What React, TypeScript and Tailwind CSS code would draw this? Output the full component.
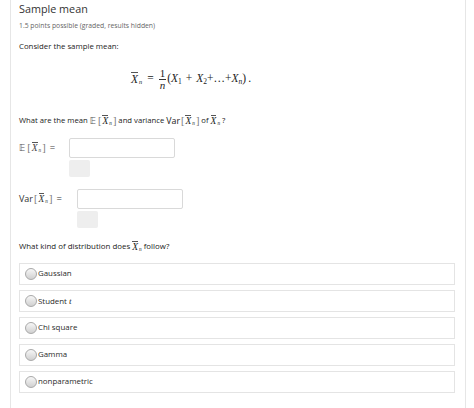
import React from "react";

const serif = "font-['Liberation_Serif','DejaVu_Serif',serif]";

function Xbar({ sub = "n" }: { sub?: string }) {
  return (
    <span className="inline-flex items-baseline">
      <span className={`${serif} italic border-t border-[#555] leading-none pt-[1px]`}>X</span>
      <span className={`${serif} italic text-[0.55em] ml-[1px] translate-y-[1px]`}>{sub}</span>
    </span>
  );
}

function BbE() {
  return <span className="font-['DejaVu_Sans',sans-serif] text-[0.9em] mr-[2px] text-[#555]">𝔼</span>;
}

function Bracket({ children }: { children: React.ReactNode }) {
  return (
    <span className="inline-flex items-baseline">
      <span className={`${serif} text-[1.1em] text-[#777] mr-[1px]`}>[</span>
      {children}
      <span className={`${serif} text-[1.1em] text-[#777] ml-[1px]`}>]</span>
    </span>
  );
}

function Radio({ label }: { label: React.ReactNode }) {
  return (
    <div className="h-[22px] border border-[#e4e4e4] flex items-center pl-[5px]">
      <span className="w-[12px] h-[12px] rounded-full border border-[#a9a9a9] bg-gradient-to-b from-[#f7f7f7] to-[#d0d0d0] mr-[1px] shrink-0" />
      <span className="text-[7.9px] text-[#2a2a2a] leading-none">{label}</span>
    </div>
  );
}

export default function App() {
  return (
    <div className="w-[474px] h-[408px] bg-white font-['Open_Sans',sans-serif] text-[#222] overflow-hidden">
      <div className="ml-[10px] w-[456px] h-full border-l border-r border-[#e6e6e6] pl-[8px] pr-[10px]">
        <div className="h-[18px] flex items-center text-[10.8px] text-[#333]">Sample mean</div>
        <div className="mt-[2px] h-[12px] flex items-center text-[6.8px] text-[#666]">1.5 points possible (graded, results hidden)</div>
        <div className="mt-[8px] h-[14px] flex items-center text-[7.8px] text-[#222]">Consider the sample mean:</div>

        <div className={`mt-[9px] h-[32px] pl-[112px] flex items-center text-[11.5px] text-[#222] ${serif}`}>
          <Xbar />
          <span className="mx-[5px]">=</span>
          <span className="inline-flex flex-col items-center leading-[11px] mr-[1px] text-[11px]">
            <span className="px-[1px] border-b border-[#333]">1</span>
            <span className="italic">n</span>
          </span>
          <span>(</span>
          <span className="italic">X</span>
          <span className="text-[7.5px] translate-y-[3px]">1</span>
          <span className="mx-[4px]">+</span>
          <span className="italic">X</span>
          <span className="text-[7.5px] translate-y-[3px]">2</span>
          <span>+…+</span>
          <span className="italic">X</span>
          <span className="text-[7.5px] italic translate-y-[3px]">n</span>
          <span>)</span>
          <span className="ml-[2px]">.</span>
        </div>

        <div className="mt-[19px] h-[14px] text-[7.7px] text-[#222] flex items-center whitespace-nowrap">
          <span>What are the mean&nbsp;</span>
          <span className="inline-flex items-baseline text-[9.5px]"><BbE /><Bracket><Xbar /></Bracket></span>
          <span>&nbsp;and variance&nbsp;</span>
          <span className="inline-flex items-baseline"><span className="text-[8.8px] mr-[1px]">Var</span><span className="text-[9.5px]"><Bracket><Xbar /></Bracket></span></span>
          <span>&nbsp;of&nbsp;</span>
          <span className="text-[9.5px]"><Xbar /></span>
          <span>&nbsp;?</span>
        </div>

        <div className="mt-[10px] flex items-center h-[20px]">
          <span className="w-[50px] text-[9.5px] text-[#444] inline-flex items-baseline whitespace-nowrap"><BbE /><Bracket><Xbar /></Bracket><span className={`${serif} ml-[4px]`}>=</span></span>
          <div className="w-[106px] h-[20px] border border-[#d9d9d9] rounded-[2px]" />
        </div>
        <div className="mt-[2px] ml-[50px] w-[21px] h-[17px] rounded-[2px] bg-[#eeeeee]" />

        <div className="mt-[12px] flex items-center h-[20px]">
          <span className="w-[58px] text-[9.5px] text-[#333] inline-flex items-baseline whitespace-nowrap"><span className="font-['Open_Sans',sans-serif] text-[9px] mr-[1px]">Var</span><Bracket><Xbar /></Bracket><span className={`${serif} ml-[4px]`}>=</span></span>
          <div className="w-[106px] h-[20px] border border-[#d9d9d9] rounded-[2px]" />
        </div>
        <div className="mt-[2px] ml-[58px] w-[21px] h-[17px] rounded-[2px] bg-[#eeeeee]" />

        <div className="mt-[12px] h-[14px] text-[7.9px] text-[#222] flex items-center whitespace-nowrap">
          <span>What kind of distribution does&nbsp;</span>
          <span className="text-[9.5px]"><Xbar /></span>
          <span>&nbsp;follow?</span>
        </div>

        <div className="mt-[9px] flex flex-col gap-[5px]">
          <Radio label="Gaussian" />
          <Radio label={<span>Student <span className={`${serif} italic text-[9px]`}>t</span></span>} />
          <Radio label="Chi square" />
          <Radio label="Gamma" />
          <Radio label="nonparametric" />
        </div>
      </div>
    </div>
  );
}
